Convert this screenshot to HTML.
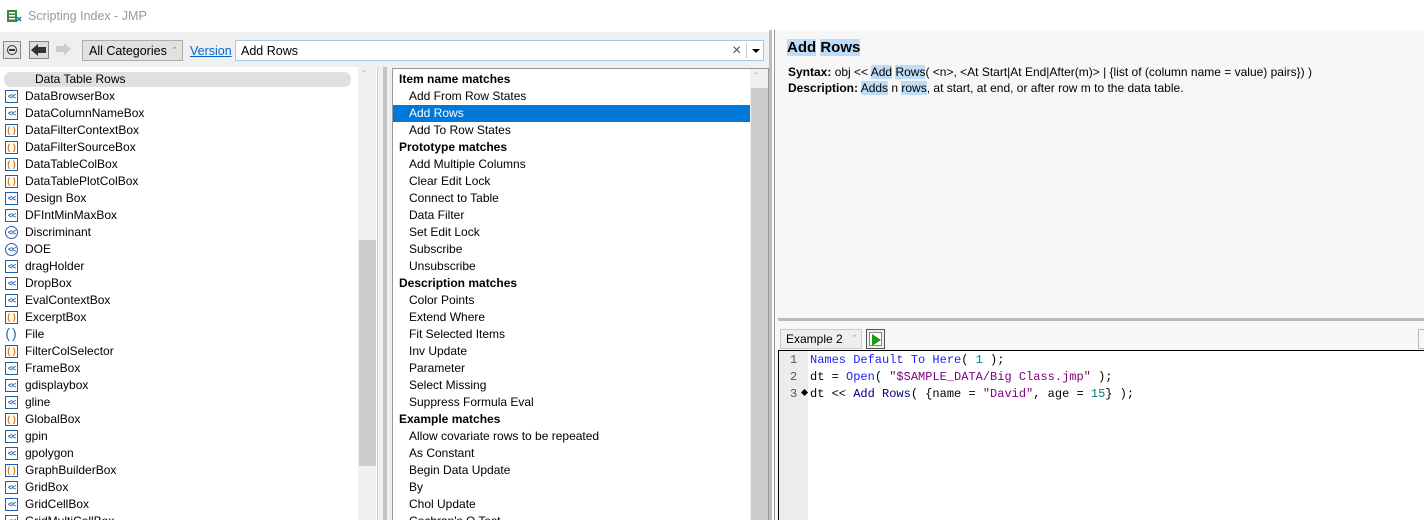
<!DOCTYPE html>
<html><head><meta charset="utf-8"><style>
*{margin:0;padding:0;box-sizing:border-box}
body{width:1424px;height:520px;overflow:hidden;background:#f0f0f0;font-family:"Liberation Sans",sans-serif;font-size:12px;color:#000;position:relative}
.abs{position:absolute}
.title{left:0;top:0;width:1424px;height:32px;background:#fff;color:#999;font-size:12.5px}
.row{position:absolute;left:0;height:17px;line-height:17px;white-space:nowrap}
.ic{position:absolute;left:5px;top:2px;width:13px;height:13px;border:1px solid #1f5fa8;font-size:8px;line-height:11px;text-align:center;color:#1f5fa8;font-weight:bold;letter-spacing:-1px}
.ic.o{border-color:#1f5fa8;color:#e07a10;font-size:9px;letter-spacing:0}
.ic.c{border-radius:50%}
.ic.f{border:none;font-size:14px;color:#1f5fa8;font-weight:normal;left:4px;top:0;line-height:15px}
.lt{position:absolute;left:25px}
.mh{font-weight:bold;padding-left:6px}
.mi{padding-left:16px}
code,pre{font-family:"Liberation Mono",monospace}
</style></head><body>
<div class="abs title">
<svg class="abs" style="left:6px;top:8px" width="16" height="16"><rect x="1" y="2" width="10" height="12" fill="#3a8a3a"/><rect x="3" y="4" width="6" height="1.5" fill="#fff"/><rect x="3" y="7" width="6" height="1.5" fill="#fff"/><rect x="3" y="10" width="6" height="1.5" fill="#fff"/><path d="M11 9l4 4M15 9l-4 4" stroke="#1f6fc0" stroke-width="1.5"/></svg>
<span class="abs" style="left:28px;top:9px">Scripting Index - JMP</span></div>
<!-- toolbar -->
<div class="abs" style="left:3px;top:41px;width:18px;height:18px;border:1px solid #888;background:#e5e5e5"><div class="abs" style="left:3px;top:3px;width:10px;height:10px;border:1px solid #333;border-radius:50%"></div><div class="abs" style="left:5px;top:7px;width:6px;height:1.5px;background:#333"></div></div>
<div class="abs" style="left:29px;top:41px;width:20px;height:18px;border:1px solid #888;background:#ddd"><div class="abs" style="left:8px;top:5px;width:8px;height:6px;background:#333"></div><div class="abs" style="left:1px;top:2px;border:6px solid transparent;border-right:7px solid #333;border-left:0"></div></div>
<div class="abs" style="left:53px;top:41px;width:20px;height:18px;background:#eee"><div class="abs" style="left:3px;top:5px;width:8px;height:6px;background:#ccc"></div><div class="abs" style="left:11px;top:2px;border:6px solid transparent;border-left:7px solid #ccc;border-right:0"></div></div>
<div class="abs" style="left:82px;top:40px;width:101px;height:21px;border:1px solid #adadad;background:#e1e1e1;line-height:20px;padding-left:6px;font-size:12.5px">All Categories <span style="position:absolute;right:6px;top:0;font-size:9px;color:#555">&#711;</span></div>
<div class="abs" style="left:190px;top:44px;color:#0066cc;text-decoration:underline;font-size:12.5px">Version</div>
<div class="abs" style="left:235px;top:40px;width:529px;height:21px;border:1px solid #99c9ef;background:#fff;line-height:20px;padding-left:5px;font-size:12.5px">Add Rows<span class="abs" style="left:496px;top:0;color:#555;font-size:16px">×</span><span class="abs" style="left:510px;top:2px;width:1px;height:15px;background:#ccc"></span><span class="abs" style="left:516px;top:8px;border:4px solid transparent;border-top:4px solid #000"></span></div>
<!-- left panel -->
<div class="abs" style="left:0;top:67px;width:378px;height:453px;background:#fff;border-right:1px solid #ccc;overflow:hidden">
<div class="abs" style="left:4px;top:5px;width:347px;height:15px;background:#e0e0e0;border-radius:7px;line-height:15px;padding-left:31px">Data Table Rows</div>
<div class="abs" style="left:358px;top:0;width:18px;height:453px;background:#f0f0f0"></div>
<div class="abs" style="left:359px;top:173px;width:17px;height:226px;background:#cdcdcd"></div>
<div class="abs" style="left:362px;top:3px;color:#aaa;font-size:10px">&#710;</div>
<div id="ll"></div>
</div>
<div class="abs" style="left:383px;top:67px;width:4px;height:453px;background:#c4c4c4"></div>
<!-- middle -->
<div class="abs" style="left:392px;top:68px;width:377px;height:452px;background:#fff;border:1px solid #999;border-bottom:none;overflow:hidden">
<div class="abs" style="left:357px;top:0;width:18px;height:452px;background:#f0f0f0"></div>
<div class="abs" style="left:358px;top:19px;width:17px;height:433px;background:#cdcdcd"></div>
<div class="abs" style="left:361px;top:3px;color:#aaa;font-size:10px">&#710;</div>
<div id="ml" class="abs" style="left:0;top:2px;width:357px"></div>
</div>
<div class="abs" style="left:769px;top:30px;width:3px;height:490px;background:#bdbdbd"></div>
<div class="abs" style="left:772px;top:30px;width:2px;height:490px;background:#fff"></div>
<div class="abs" style="left:774px;top:30px;width:1px;height:490px;background:#999"></div>
<!-- right -->
<div class="abs" style="left:775px;top:30px;width:649px;height:490px;background:#f7f7f7"></div>
<div class="abs" style="left:787px;top:39px;font-size:15px;font-weight:bold"><span style="background:#bfdcf7">Add</span> <span style="background:#bfdcf7">Rows</span></div>
<div class="abs" style="left:788px;top:65px;white-space:nowrap"><b>Syntax:</b> obj &lt;&lt; <span style="background:#bfdcf7">Add</span> <span style="background:#bfdcf7">Rows</span>( &lt;n&gt;, &lt;At Start|At End|After(m)&gt; | {list of (column name = value) pairs}) )</div>
<div class="abs" style="left:788px;top:81px;white-space:nowrap"><b>Description:</b> <span style="background:#bfdcf7">Adds</span> n <span style="background:#bfdcf7">rows</span>, at start, at end, or after row m to the data table.</div>
<div class="abs" style="left:778px;top:318px;width:646px;height:3px;background:#bbb"></div>
<div class="abs" style="left:780px;top:329px;width:82px;height:20px;border:1px solid #ccc;background:#eee;line-height:18px;padding-left:5px">Example 2 <span style="position:absolute;right:5px;top:0;font-size:9px;color:#777">&#711;</span></div>
<div class="abs" style="left:866px;top:329px;width:19px;height:20px;border:1px solid #555;background:#eee"><div class="abs" style="left:2px;top:2px;width:13px;height:14px;background:#fff;border:1px solid #888"></div><div class="abs" style="left:5px;top:4px;border:6px solid transparent;border-left:9px solid #1a9a1a;border-right:0"></div></div>
<div class="abs" style="left:1418px;top:329px;width:8px;height:20px;border:1px solid #bbb"></div>
<div class="abs" style="left:778px;top:350px;width:646px;height:170px;background:#fff;border-top:1px solid #000;border-left:1px solid #000"></div>
<div class="abs" style="left:779px;top:351px;width:29px;height:169px;background:#ececec"></div>
<pre class="abs" style="left:790px;top:352px;font-size:12px;line-height:17px;color:#555">1
2
3</pre>
<div class="abs" style="left:802px;top:390px;width:5px;height:5px;background:#000;transform:rotate(45deg)"></div>
<pre class="abs" style="left:810px;top:352px;font-size:12px;line-height:17px;color:#000"><span style="color:#2020ff">Names Default To Here</span>( <span style="color:#008080">1</span> );
dt = <span style="color:#2020ff">Open</span>( <span style="color:#800080">"$SAMPLE_DATA/Big Class.jmp"</span> );
dt &lt;&lt; <span style="color:#000080">Add Rows</span>( {name = <span style="color:#800080">"David"</span>, age = <span style="color:#008080">15</span>} );</pre>
<script>
var L=[["b","DataBrowserBox"],["b","DataColumnNameBox"],["o","DataFilterContextBox"],["o","DataFilterSourceBox"],["o","DataTableColBox"],["o","DataTablePlotColBox"],["b","Design Box"],["b","DFIntMinMaxBox"],["c","Discriminant"],["c","DOE"],["b","dragHolder"],["b","DropBox"],["b","EvalContextBox"],["o","ExcerptBox"],["f","File"],["o","FilterColSelector"],["b","FrameBox"],["b","gdisplaybox"],["b","gline"],["o","GlobalBox"],["b","gpin"],["b","gpolygon"],["o","GraphBuilderBox"],["b","GridBox"],["b","GridCellBox"],["b","GridMultiCellBox"]];
var h="";L.forEach(function(e,i){var t=e[0],s=t=="o"?"( )":t=="f"?"( )":"&lt;&lt;";var cl="ic"+(t=="o"?" o":t=="c"?" c":t=="f"?" f":"");
h+='<div class="row" style="top:'+(21+i*17)+'px;width:358px"><span class="'+cl+'">'+s+'</span><span class="lt">'+e[1]+'</span></div>';});
document.getElementById("ll").innerHTML=h;
var M=[["h","Item name matches"],["i","Add From Row States"],["s","Add Rows"],["i","Add To Row States"],["h","Prototype matches"],["i","Add Multiple Columns"],["i","Clear Edit Lock"],["i","Connect to Table"],["i","Data Filter"],["i","Set Edit Lock"],["i","Subscribe"],["i","Unsubscribe"],["h","Description matches"],["i","Color Points"],["i","Extend Where"],["i","Fit Selected Items"],["i","Inv Update"],["i","Parameter"],["i","Select Missing"],["i","Suppress Formula Eval"],["h","Example matches"],["i","Allow covariate rows to be repeated"],["i","As Constant"],["i","Begin Data Update"],["i","By"],["i","Chol Update"],["i","Cochran's Q Test"]];
h="";M.forEach(function(e,i){var st='top:'+(i*17)+'px;width:357px;';var c=e[0]=="h"?"mh":"mi";if(e[0]=="s")st+="background:#0078d7;color:#fff;";
h+='<div class="row '+c+'" style="'+st+'">'+e[1]+'</div>';});
document.getElementById("ml").innerHTML=h;
</script>
</body></html>
